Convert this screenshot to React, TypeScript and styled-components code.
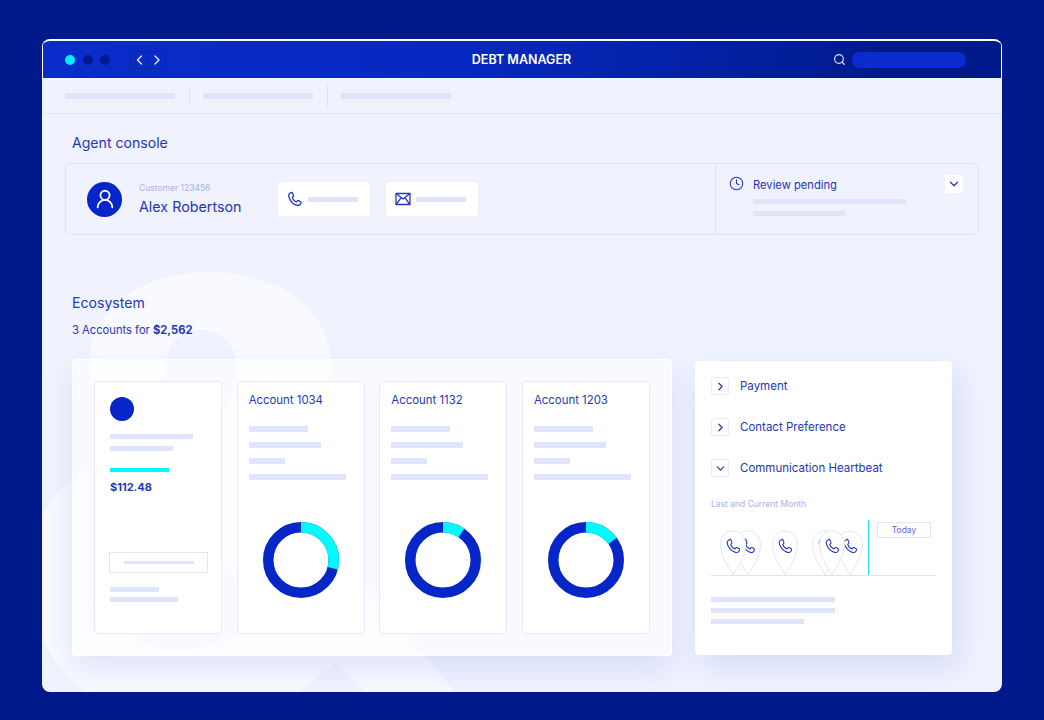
import styled, { createGlobalStyle } from "styled-components";
import { ChevronDown, ChevronLeft, ChevronRight, Clock, Search, UserRound } from "lucide-react";

const GlobalStyle = createGlobalStyle`
  html, body {
    margin: 0;
    padding: 0;
    background-color: #001a8c;
    font-family: "Inter", "Liberation Sans", sans-serif;
  }
  * { box-sizing: border-box; }
`;

const INK = "#2438b4";
const BAR = "#e0e4fa";
const BLUE = "#0626c8";
const CYAN = "#00fbff";

const Page = styled.div`
  width: 1044px;
  height: 720px;
  padding: 39px 42px 28px;
  background-color: #001a8c;
`;
const Window = styled.div`
  position: relative;
  width: 960px;
  height: 653px;
  display: flex;
  flex-direction: column;
  overflow: hidden;
  border-radius: 8px;
  background-color: #f0f3fe;
  border-top: 2px solid #fff;
  color: ${INK};
`;
// big pale flourish behind the panels
const Flourish = styled.div`
  position: absolute;
  inset: 0;
  background-color: rgba(255, 255, 255, 0.55);
  clip-path: path(evenodd, "M168 231C238 231 290 269 290 329C290 379 258 409 233 437L413 651L323 651L293 622L258 651L43 651C8 624 -17 579 -14 529C-12 489 3 459 30 439C48 426 68 414 83 404C58 379 48 354 48 319C48 269 98 231 168 231ZM123 331C123 304 138 289 158 289C180 289 195 304 195 329C195 354 180 374 158 394C136 374 123 354 123 331ZM123 449L220 569C198 599 158 611 128 609C88 607 63 574 63 529C63 489 88 469 123 449Z");
`;
const TitleBar = styled.header`
  flex: none;
  height: 37px;
  display: grid;
  grid-template-columns: 1fr auto 1fr;
  align-items: center;
  padding: 0 23px 0 22px;
  background: linear-gradient(90deg, #0a2ccb 0%, #0728c0 45%, #001a8c 88%);
  border-left: 1px solid #fff;
  border-right: 1px solid #fff;
`;
const Controls = styled.div`
  display: flex;
  align-items: center;
`;
const Dot = styled.span<{ $on?: boolean }>`
  width: 10px;
  height: 10px;
  margin-right: 7.5px;
  border-radius: 50%;
  background-color: ${(p) => (p.$on ? "#00f0ff" : "#001a8c")};
`;
const NavGroup = styled.div`
  display: flex;
  margin-left: 12.5px;
  width: 36px;
  height: 18px;
  border: 1px solid #0a259f;
  border-radius: 3px;
  & > svg {
    width: 17px;
    height: 16px;
    color: #e4e9ff;
  }
  & > svg + svg {
    border-left: 1px solid #0a259f;
  }
`;
const AppTitle = styled.h1`
  margin: 0;
  font-size: 12.5px;
  font-weight: 600;
  color: #fff;
`;
const SearchBox = styled.div`
  display: flex;
  justify-content: flex-end;
  align-items: center;
  gap: 6px;
  padding-right: 12px;
  color: #dfe6ff;
`;
const SearchPill = styled.span`
  width: 114px;
  height: 16px;
  border-radius: 8px;
  background-color: #0a2ccf;
`;
const SubNav = styled.nav`
  flex: none;
  height: 36px;
  display: flex;
  align-items: center;
  padding-left: 23px;
  border-bottom: 1px solid #e2e6f9;
`;
const SubItem = styled.div`
  height: 22px;
  display: flex;
  align-items: center;
  padding-right: 14px;
  margin-right: 13px;
  border-right: 1px solid #dfe3f7;
  &:last-child { border-right: 0; }
`;
const Bar = styled.span<{ $w: number; $h?: number; $c?: string; $mt?: number }>`
  display: block;
  flex: none;
  width: ${(p) => p.$w}px;
  height: ${(p) => p.$h ?? 6}px;
  margin-top: ${(p) => p.$mt ?? 0}px;
  background-color: ${(p) => p.$c ?? BAR};
`;
const Content = styled.main`
  position: relative;
  z-index: 1;
  flex: 1;
  padding: 19px 23px 0;
`;
const SectionTitle = styled.h2`
  margin: 0 0 0 7px;
  height: 20px;
  line-height: 20px;
  font-size: 14.1px;
  font-weight: 400;
`;
const ConsolePanel = styled.section`
  display: flex;
  width: 914px;
  height: 72px;
  margin-top: 10px;
  border: 1px solid #dde2f7;
  border-radius: 6px;
`;
const CustomerSide = styled.div`
  width: 650px;
  display: flex;
  align-items: center;
  padding-left: 21px;
  border-right: 1px solid #dde2f7;
`;
const Avatar = styled.div`
  width: 35px;
  height: 35px;
  display: flex;
  align-items: center;
  justify-content: center;
  border-radius: 50%;
  background-color: ${BLUE};
  color: #fff;
`;
const CustomerInfo = styled.div`
  width: 139px;
  margin-left: 17px;
`;
const CustomerId = styled.div`
  font-size: 8.5px;
  line-height: 13px;
  color: #a9b1ec;
`;
const CustomerName = styled.div`
  margin-top: 2px;
  font-size: 14.3px;
  line-height: 19px;
`;
const ContactChip = styled.div`
  width: 92px;
  height: 34px;
  margin-right: 16px;
  display: flex;
  align-items: center;
  gap: 5px;
  padding-left: 9px;
  background-color: #fff;
  border-radius: 3px;
  box-shadow: 0 0 0 1px #eef0fb;
`;
const ReviewSide = styled.div`
  flex: 1;
  position: relative;
  padding: 13px 0 0 13px;
`;
const ReviewHead = styled.div`
  display: flex;
  align-items: center;
  gap: 9px;
  font-size: 11.2px;
  line-height: 16px;
  svg { margin-top: -3px; }
`;
const ReviewBars = styled.div`
  margin-left: 24px;
  margin-top: 6px;
`;
const ChevronBox = styled.span<{ $bordered?: boolean }>`
  flex: none;
  width: 18px;
  height: 18px;
  display: flex;
  align-items: center;
  justify-content: center;
  background-color: #fff;
  border-radius: 2px;
  border: ${(p) => (p.$bordered ? "1px solid #e8ebfa" : "0")};
  color: ${INK};
`;
const ReviewToggle = styled(ChevronBox)`
  position: absolute;
  top: 11px;
  right: 15px;
`;
const EcoTitle = styled(SectionTitle)`
  margin-top: 58px;
`;
const Summary = styled.p`
  margin: 9px 0 0 7px;
  font-size: 11.2px;
  line-height: 16px;
  strong { font-weight: 700; }
`;
const Ecosystem = styled.section`
  display: flex;
  align-items: flex-start;
  margin: 21px 0 0 7px;
`;
const AccountsPanel = styled.div`
  width: 600px;
  height: 297px;
  display: flex;
  gap: 14.67px;
  padding: 21px 21px;
  background-color: rgba(255, 255, 255, 0.55);
  border: 1px solid #fff;
  border-radius: 4px;
  box-shadow: 0 14px 30px rgba(80, 100, 210, 0.14);
`;
const Card = styled.article`
  width: 128px;
  height: 253px;
  flex: none;
  padding: 15px 15px 0;
  background-color: #fff;
  border: 1px solid #e6e9f9;
  border-radius: 4px;
`;
const AccountCard = styled(Card)`
  padding: 10px 11px 0;
`;
const AccountName = styled.h3`
  margin: 0 0 18px;
  font-size: 11.4px;
  line-height: 16px;
  font-weight: 400;
`;
const StatBlob = styled.div`
  width: 24px;
  height: 24px;
  margin-bottom: 13px;
  border-radius: 50%;
  background-color: ${BLUE};
`;
const Amount = styled.div`
  margin-top: 8px;
  font-size: 11px;
  line-height: 14px;
  font-weight: 700;
`;
const OutlineBox = styled.div`
  width: 99px;
  height: 21px;
  margin: 58px 0 0 -1px;
  display: flex;
  align-items: center;
  justify-content: center;
  border: 1px solid #e0e4f5;
`;
const DonutWrap = styled.div`
  margin: 42px 0 0 14px;
  width: 76px;
  height: 76px;
`;
const SidePanel = styled.aside`
  width: 257px;
  height: 294px;
  margin: 2px 0 0 23px;
  padding: 16px 16px 0;
  background-color: #fff;
  border-radius: 4px;
  box-shadow: 6px 12px 30px rgba(80, 100, 210, 0.17);
`;
const Row = styled.div`
  display: flex;
  align-items: center;
  gap: 11px;
  height: 18px;
  margin-bottom: 23px;
  font-size: 11.5px;
`;
const ChartLabel = styled.div`
  margin-top: -2px;
  font-size: 8.5px;
  line-height: 12px;
  color: #a9b1ec;
`;
const Chart = styled.div`
  position: relative;
  width: 224px;
  height: 59px;
  margin-top: 7px;
  border-bottom: 1px solid #dfe3f7;
  svg { display: block; }
`;
const TodayTag = styled.span`
  position: absolute;
  top: 5px;
  right: 4px;
  width: 54px;
  height: 16px;
  display: flex;
  align-items: center;
  justify-content: center;
  border: 1px solid #e0e4f5;
  font-size: 8.5px;
  color: #5d6bc8;
`;
const NoteBars = styled.div`
  margin-top: 21px;
`;

const PHONE_D =
  "M4.2 1.5 2.6 2.6C1.4 3.6 1.6 6 3 8.6c1.7 3 4.4 5.2 7 5.8 1.5.3 2.8-.2 3.4-1.2l.6-1.2c.2-.5 0-.9-.4-1.2l-2.1-1.2c-.5-.2-.9-.1-1.2.3l-.8 1c-1.8-.5-3.6-2.5-4.3-4.5l.9-.8c.4-.3.5-.8.3-1.2L5.4 1.8c-.3-.5-.8-.6-1.2-.3Z";

const PhoneIcon = () => (
  <svg width="16" height="16" viewBox="0 0 16 16" fill="none" stroke={INK} strokeWidth="1.3" strokeLinejoin="round">
    <path d={PHONE_D} />
  </svg>
);

const MailIcon = () => (
  <svg width="16" height="16" viewBox="0 0 16 16" fill="none" stroke={INK} strokeWidth="1.3" strokeLinejoin="round">
    <rect x="1" y="2.5" width="14" height="11" />
    <path d="M1 2.5l7 5.500 7-5.500M1 13.500l5.200-6.900M15 13.500 9.800 6.600" />
  </svg>
);

const Donut = ({ share }: { share: number }) => {
  const r = 32.75;
  const c = 2 * Math.PI * r;
  return (
    <svg width="76" height="76" viewBox="0 0 76 76" fill="none" strokeWidth="10.500">
      <circle cx="38" cy="38" r={r} stroke={BLUE} />
      <circle
        cx="38"
        cy="38"
        r={r}
        stroke={CYAN}
        strokeDasharray={`${c * share} ${c}`}
        transform="rotate(-90 38 38)"
      />
    </svg>
  );
};

// listed back to front: each pin hides part of the one behind it
const PINS = [37, 22, 74, 139, 114, 121];

const Pin = ({ x }: { x: number }) => (
  <g transform={`translate(${x} 14)`}>
    <path
      d="M0 44C-4 36-12.500 26-12.500 13.500-12.500 5.500-7 0 0 0s12.500 5.500 12.500 13.500C12.500 26 4 36 0 44Z"
      fill="#fff"
      stroke="#e2e6f8"
    />
    <g transform="translate(-7.500 7)" fill="none" stroke={INK} strokeWidth="1.1" strokeLinejoin="round">
      <path d={PHONE_D} />
    </g>
  </g>
);

const accounts = [
  { name: "Account 1034", share: 0.29 },
  { name: "Account 1132", share: 0.095 },
  { name: "Account 1203", share: 0.15 },
];

export default function App() {
  return (
    <Page>
      <GlobalStyle />
      <Window>
        <Flourish />
        <TitleBar>
          <Controls>
            <Dot $on />
            <Dot />
            <Dot />
            <NavGroup>
              <ChevronLeft strokeWidth={2} />
              <ChevronRight strokeWidth={2} />
            </NavGroup>
          </Controls>
          <AppTitle>DEBT MANAGER</AppTitle>
          <SearchBox>
            <Search size={13} strokeWidth={2.2} />
            <SearchPill />
          </SearchBox>
        </TitleBar>
        <SubNav>
          <SubItem><Bar $w={110} /></SubItem>
          <SubItem><Bar $w={110} /></SubItem>
          <SubItem><Bar $w={110} /></SubItem>
        </SubNav>
        <Content>
          <SectionTitle>Agent console</SectionTitle>
          <ConsolePanel>
            <CustomerSide>
              <Avatar><UserRound size={22} strokeWidth={2} /></Avatar>
              <CustomerInfo>
                <CustomerId>Customer 123456</CustomerId>
                <CustomerName>Alex Robertson</CustomerName>
              </CustomerInfo>
              <ContactChip><PhoneIcon /><Bar $w={50} $h={5} /></ContactChip>
              <ContactChip><MailIcon /><Bar $w={50} $h={5} /></ContactChip>
            </CustomerSide>
            <ReviewSide>
              <ReviewHead><Clock size={15} strokeWidth={1.7} />Review pending</ReviewHead>
              <ReviewBars>
                <Bar $w={153} $h={5} />
                <Bar $w={92} $h={5} $mt={7} />
              </ReviewBars>
              <ReviewToggle><ChevronDown size={14} strokeWidth={2.2} /></ReviewToggle>
            </ReviewSide>
          </ConsolePanel>
          <EcoTitle>Ecosystem</EcoTitle>
          <Summary>3 Accounts for <strong>$2,562</strong></Summary>
          <Ecosystem>
            <AccountsPanel>
              <Card>
                <StatBlob />
                <Bar $w={83} $h={5} />
                <Bar $w={63} $h={5} $mt={7} />
                <Bar $w={59} $h={4} $c={CYAN} $mt={17} />
                <Amount>$112.48</Amount>
                <OutlineBox><Bar $w={70} $h={3} /></OutlineBox>
                <Bar $w={49} $h={5} $mt={14} />
                <Bar $w={68} $h={5} $mt={5} />
              </Card>
              {accounts.map((a) => (
                <AccountCard key={a.name}>
                  <AccountName>{a.name}</AccountName>
                  <Bar $w={59} />
                  <Bar $w={72} $mt={10} />
                  <Bar $w={36} $mt={10} />
                  <Bar $w={97} $mt={10} />
                  <DonutWrap><Donut share={a.share} /></DonutWrap>
                </AccountCard>
              ))}
            </AccountsPanel>
            <SidePanel>
              <Row><ChevronBox $bordered><ChevronRight size={13} strokeWidth={2.2} /></ChevronBox>Payment</Row>
              <Row><ChevronBox $bordered><ChevronRight size={13} strokeWidth={2.2} /></ChevronBox>Contact Preference</Row>
              <Row><ChevronBox $bordered><ChevronDown size={13} strokeWidth={2.2} /></ChevronBox>Communication Heartbeat</Row>
              <ChartLabel>Last and Current Month</ChartLabel>
              <Chart>
                <svg width="224" height="58" viewBox="0 0 224 58">
                  {PINS.map((x) => (
                    <Pin key={x} x={x} />
                  ))}
                  <path d="M157.500 3V58" stroke="#22dfe6" />
                </svg>
                <TodayTag>Today</TodayTag>
              </Chart>
              <NoteBars>
                <Bar $w={124} $h={5} />
                <Bar $w={124} $h={5} $mt={6} />
                <Bar $w={93} $h={5} $mt={6} />
              </NoteBars>
            </SidePanel>
          </Ecosystem>
        </Content>
      </Window>
    </Page>
  );
}
